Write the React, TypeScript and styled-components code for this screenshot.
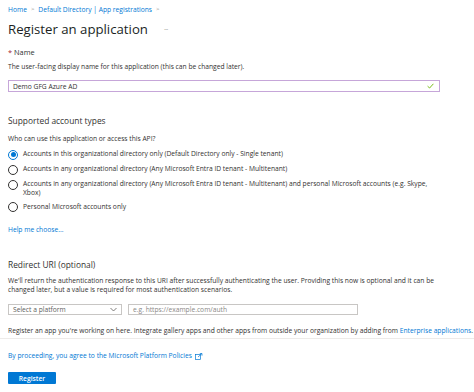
import React from 'react';
import styled, { createGlobalStyle } from 'styled-components';

const GlobalStyle = createGlobalStyle`
  html, body {
    margin: 0;
    padding: 0;
    background: #ffffff;
  }
  body {
    font-family: 'Open Sans', 'Noto Sans', sans-serif;
    color: #323130;
  }
`;

const accountOptions = [
  {
    id: 'single',
    label: 'Accounts in this organizational directory only (Default Directory only - Single tenant)',
    checked: true,
  },
  {
    id: 'multi',
    label: 'Accounts in any organizational directory (Any Microsoft Entra ID tenant - Multitenant)',
  },
  {
    id: 'multi-personal',
    label: (
      <>
        Accounts in any organizational directory (Any Microsoft Entra ID tenant - Multitenant) and personal
        Microsoft accounts (e.g. Skype,
        <br />
        Xbox)
      </>
    ),
  },
  { id: 'personal', label: 'Personal Microsoft accounts only' },
];

export default function App() {
  return (
    <>
      <GlobalStyle />
      <Page>
        <Breadcrumb>
          <Crumb>Home</Crumb>
          <Chevron>&gt;</Chevron>
          <Crumb>Default Directory | App registrations</Crumb>
          <Chevron>&gt;</Chevron>
        </Breadcrumb>

        <TitleRow>
          <Title>Register an application</Title>
          <More>···</More>
        </TitleRow>

        <FieldLabel>
          <Required>*</Required> Name
        </FieldLabel>
        <Hint>The user-facing display name for this application (this can be changed later).</Hint>
        <NameInput>
          <span>Demo GFG Azure AD</span>
          <svg width="7" height="6" viewBox="0 0 7 6">
            <path d="M0.6 3.2 L2.6 5 L6.4 0.8" fill="none" stroke="#6bb700" strokeWidth="0.9" />
          </svg>
        </NameInput>

        <SectionTitle $top={23}>Supported account types</SectionTitle>
        <Hint $top={7}>Who can use this application or access this API?</Hint>
        <RadioList>
          {accountOptions.map((o) => (
            <RadioRow key={o.id}>
              <Radio $checked={!!o.checked} />
              <RadioLabel>{o.label}</RadioLabel>
            </RadioRow>
          ))}
        </RadioList>

        <Link $top={13}>Help me choose...</Link>

        <SectionTitle $top={24}>Redirect URI (optional)</SectionTitle>
        <Paragraph>
          We'll return the authentication response to this URI after successfully authenticating the user. Providing
          this now is optional and it can be
          <br />
          changed later, but a value is required for most authentication scenarios.
        </Paragraph>
        <UriRow>
          <Select>
            <span>Select a platform</span>
            <svg width="7" height="5" viewBox="0 0 7 5">
              <path d="M0.5 1 L3.5 4 L6.5 1" fill="none" stroke="#605e5c" strokeWidth="0.8" />
            </svg>
          </Select>
          <UriInput>e.g. https://example.com/auth</UriInput>
        </UriRow>
        <Note>
          Register an app you're working on here. Integrate gallery apps and other apps from outside your organization
          by adding from <InlineLink>Enterprise applications</InlineLink>.
        </Note>
      </Page>

      <Footer>
        <Link>
          By proceeding, you agree to the Microsoft Platform Policies
          <svg width="8" height="7" viewBox="0 0 8 7" style={{ marginLeft: 3 }}>
            <rect x="0.5" y="1.5" width="5" height="5" fill="none" stroke="#0078d4" strokeWidth="0.7" />
            <path d="M3 4 L7 0.5 M4.8 0.5 H7 V2.7" fill="none" stroke="#0078d4" strokeWidth="0.7" />
          </svg>
        </Link>
        <PrimaryButton>Register</PrimaryButton>
      </Footer>
    </>
  );
}

const Page = styled.main`
  padding: 4px 0 0 8px;
  width: 466px;
`;

const Breadcrumb = styled.nav`
  display: flex;
  align-items: center;
  gap: 3px;
  height: 10px;
  font-size: 6.7px;
`;

const Crumb = styled.span`
  color: #0078d4;
`;

const Chevron = styled.span`
  color: #8a8886;
  font-size: 6px;
  margin: 0 1px;
`;

const TitleRow = styled.div`
  display: flex;
  align-items: center;
  gap: 16px;
  margin-top: 7px;
  height: 16px;
`;

const Title = styled.h1`
  margin: 0;
  font-size: 13.2px;
  font-weight: 400;
  line-height: 16px;
  color: #201f1e;
`;

const More = styled.span`
  color: #8a8886;
  font-size: 7px;
  letter-spacing: -0.5px;
`;

const FieldLabel = styled.div`
  margin-top: 10px;
  font-size: 7.4px;
  line-height: 10px;
`;

const Required = styled.span`
  color: #a4262c;
`;

const Hint = styled.div<{ $top?: number }>`
  margin-top: ${(p) => p.$top ?? 5}px;
  font-size: 6.7px;
  line-height: 10px;
`;

const NameInput = styled.div`
  margin-top: 8px;
  box-sizing: border-box;
  width: 432px;
  height: 12px;
  border: 1px solid #c6a6d9;
  padding: 0 5px 0 4px;
  display: flex;
  align-items: center;
  justify-content: space-between;
  font-size: 6.7px;
`;

const SectionTitle = styled.h2<{ $top: number }>`
  margin: ${(p) => p.$top}px 0 0;
  font-size: 8.4px;
  font-weight: 400;
  line-height: 12px;
  color: #323130;
`;

const RadioList = styled.div`
  margin-top: 6px;
  display: flex;
  flex-direction: column;
  gap: 5.6px;
`;

const RadioRow = styled.label`
  display: flex;
  align-items: flex-start;
  gap: 5px;
`;

const Radio = styled.span<{ $checked: boolean }>`
  box-sizing: border-box;
  flex: none;
  width: 10px;
  height: 10px;
  margin-top: -0.5px;
  border-radius: 50%;
  border: 1px solid ${(p) => (p.$checked ? '#0078d4' : '#323130')};
  display: flex;
  align-items: center;
  justify-content: center;
  &::after {
    content: '';
    width: 5px;
    height: 5px;
    border-radius: 50%;
    background: ${(p) => (p.$checked ? '#0078d4' : 'transparent')};
  }
`;

const RadioLabel = styled.span`
  font-size: 6.7px;
  line-height: 8.5px;
`;

const Link = styled.div<{ $top?: number }>`
  margin-top: ${(p) => p.$top ?? 0}px;
  display: flex;
  align-items: center;
  color: #0078d4;
  font-size: 6.7px;
  line-height: 10px;
`;

const Paragraph = styled.p`
  margin: 5px 0 0;
  font-size: 6.7px;
  line-height: 9px;
`;

const UriRow = styled.div`
  display: flex;
  gap: 6px;
  margin-top: 10px;
`;

const Field = styled.div`
  box-sizing: border-box;
  height: 11px;
  border: 1px solid #c8c6c4;
  display: flex;
  align-items: center;
  padding: 0 4px;
  font-size: 6.7px;
`;

const Select = styled(Field)`
  width: 114px;
  justify-content: space-between;
  color: #605e5c;
`;

const UriInput = styled(Field)`
  width: 230px;
  color: #8a8886;
`;

const Note = styled.div`
  margin-top: 11px;
  font-size: 6.7px;
  line-height: 10px;
  white-space: nowrap;
`;

const InlineLink = styled.span`
  color: #0078d4;
`;

const Footer = styled.footer`
  margin-top: 2px;
  border-top: 1px solid #edebe9;
  padding: 12px 8px 0;
  display: flex;
  flex-direction: column;
  align-items: flex-start;
`;

const PrimaryButton = styled.button`
  margin-top: 11px;
  width: 48px;
  height: 12px;
  padding: 0;
  border: none;
  border-radius: 1px;
  background: #0078d4;
  color: #ffffff;
  font-family: inherit;
  font-size: 6.7px;
  font-weight: 600;
`;
